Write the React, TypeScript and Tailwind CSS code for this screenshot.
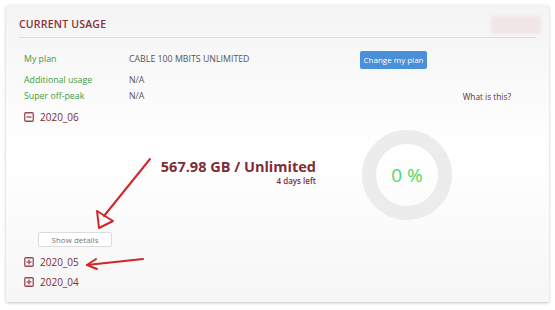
import React from 'react';

const font = { fontFamily: '"Open Sans", "Liberation Sans", sans-serif' };

function BoxIcon({ open }: { open: boolean }) {
  return (
    <svg width="10" height="10" viewBox="0 0 10 10" className="shrink-0">
      <rect x="0.75" y="0.75" width="8.5" height="8.5" rx="1" fill="none" stroke="#9b4a55" strokeWidth="1.3" />
      <line x1="2.5" y1="5" x2="7.5" y2="5" stroke="#9b4a55" strokeWidth="1.3" />
      {!open && <line x1="5" y1="2.5" x2="5" y2="7.5" stroke="#9b4a55" strokeWidth="1.3" />}
    </svg>
  );
}

function Period({ label, open }: { label: string; open: boolean }) {
  return (
    <div className="flex items-center gap-[6px] text-[10px] text-[#7a2a35] h-[20px]">
      <BoxIcon open={open} />
      <span>{label}</span>
    </div>
  );
}

export default function App() {
  return (
    <div className="w-[555px] h-[310px] bg-white relative" style={font}>
      <div className="absolute left-[6px] top-[5px] w-[543px] h-[297px] rounded-[2px] bg-gradient-to-b from-[#f4f4f4] via-white to-[#f6f6f6] shadow-[0_1px_3px_rgba(0,0,0,0.25)]">
        <div className="flex items-center justify-between pl-[13px] pr-[8px] pt-[7px] h-[32px]">
          <h2 className="text-[10.5px] font-semibold text-[#8a2f38] tracking-[0.2px]">CURRENT USAGE</h2>
          <div className="w-[50px] h-[18px] bg-[#f0e6e8] blur-[1.5px]" />
        </div>
        <div className="mx-[13px] h-[1px] bg-[#dcdcdc]" />

        <div className="px-[18px] pt-[10px]">
          <div className="flex items-center h-[24px] text-[8.8px]">
            <span className="w-[105px] text-[#3f9a3f]">My plan</span>
            <span className="w-[231px] text-[#555]">CABLE 100 MBITS UNLIMITED</span>
            <button className="h-[18px] w-[67px] rounded-[2px] bg-[#4a90d9] text-white text-[8px]">Change my plan</button>
          </div>
          <div className="flex items-center h-[16px] text-[8.8px] mt-[1px]">
            <span className="w-[105px] text-[#3f9a3f]">Additional usage</span>
            <span className="text-[#555]">N/A</span>
          </div>
          <div className="flex items-center h-[16px] text-[8.8px]">
            <span className="w-[105px] text-[#3f9a3f]">Super off-peak</span>
            <span className="text-[#555]">N/A</span>
            <span className="ml-auto mr-[20px] text-[8.3px] text-[#6a2a30]">What is this?</span>
          </div>
          <div className="mt-[2px]">
            <Period label="2020_06" open />
          </div>

          <div className="flex items-start h-[125px]">
            <div className="flex flex-col w-[120px] pt-[105px]">
              <button className="ml-[14px] h-[15px] w-[74px] border border-[#dcdcdc] rounded-[2px] bg-white text-[8px] text-[#777]">Show details</button>
            </div>
            <div className="flex flex-col items-end w-[172px] pt-[31px]">
              <div className="text-[14.5px] font-bold text-[#7e2d36] leading-[18px]">567.98 GB / Unlimited</div>
              <div className="text-[8px] font-semibold text-[#7e2d36] leading-[10px]">4 days left</div>
            </div>
            <div className="ml-[46px] mt-[3px] w-[90px] h-[90px] rounded-full border-[14px] border-[#ececec] flex items-center justify-center">
              <span className="text-[19px] text-[#4cd964]">0 %</span>
            </div>
          </div>

          <div>
            <Period label="2020_05" open={false} />
            <Period label="2020_04" open={false} />
          </div>
        </div>
      </div>

      <svg className="absolute left-0 top-0 pointer-events-none" width="555" height="310">
        <g stroke="#d0262a" strokeWidth="2" fill="none" strokeLinecap="round" strokeLinejoin="round">
          <path d="M150 159 L104 216" />
          <path d="M97 211 L99 228 L113 221 Z" />
          <path d="M143 259 L87 265" />
          <path d="M96 259 L87 265 L97 269" />
        </g>
      </svg>
    </div>
  );
}
